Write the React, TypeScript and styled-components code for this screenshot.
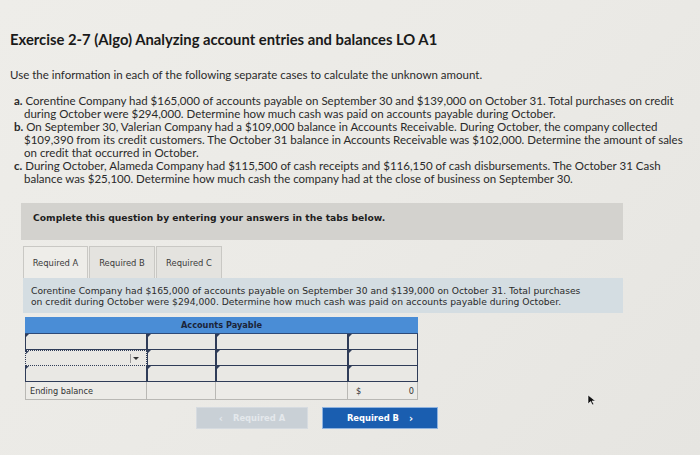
import React from 'react';
import styled, { createGlobalStyle } from 'styled-components';

const GlobalStyle = createGlobalStyle`
  html, body {
    margin: 0;
    padding: 0;
    background: #ebeae6;
  }
  body {
    font-family: Lato, "Open Sans", sans-serif;
    color: #1e1e1e;
  }
`;

const Page = styled.div`
  position: relative;
  width: 700px;
  height: 455px;
  overflow: hidden;
  box-sizing: border-box;
  padding: 29px 0 0 10px;
  background: linear-gradient(135deg, #eeede9 0%, #ebeae6 50%, #e6e5e1 100%);
`;

const Title = styled.h1`
  margin: 0;
  font-family: Lato, sans-serif;
  font-size: 14.8px;
  font-weight: 700;
  line-height: 20px;
  color: #1a1a1a;
`;

const Intro = styled.p`
  margin: 19px 0 0;
  font-family: Lato, sans-serif;
  font-size: 11.5px;
  line-height: 13px;
  color: #2a2a2a;
`;

const CaseList = styled.ol`
  list-style: none;
  margin: 13px 0 0;
  padding: 0 0 0 4px;
  width: 684px;
`;

const CaseItem = styled.li`
  font-family: Lato, sans-serif;
  font-size: 11.5px;
  line-height: 13px;
  color: #2a2a2a;
  padding-left: 10px;
  text-indent: -10px;
`;

const Letter = styled.span`
  font-weight: 700;
`;

const Banner = styled.div`
  margin: 18px 0 0 11px;
  width: 602px;
  height: 37px;
  box-sizing: border-box;
  padding: 9px 12px;
  background: #d3d2ce;
  font-family: "DejaVu Sans", Verdana, sans-serif;
  font-size: 9.2px;
  font-weight: 700;
  color: #1e1e1e;
`;

const Tabs = styled.div`
  display: flex;
  gap: 1px;
  margin: 6px 0 0 13px;
`;

const Tab = styled.div<{ $active?: boolean }>`
  width: ${p => (p.$active ? 65 : 66)}px;
  height: 32px;
  box-sizing: border-box;
  display: flex;
  align-items: center;
  justify-content: center;
  border: 1px solid #c9c8c4;
  border-bottom: none;
  background: ${p => (p.$active ? '#eeede9' : '#e4e3df')};
  font-family: "DejaVu Sans", Verdana, sans-serif;
  font-size: 8.4px;
  color: #3a3a3a;
`;

const InfoPanel = styled.div`
  margin-left: 13px;
  width: 600px;
  height: 35px;
  box-sizing: border-box;
  padding: 7px 8px 0;
  background: #d4dde2;
  font-family: "DejaVu Sans", Verdana, sans-serif;
  font-size: 9.2px;
  line-height: 11px;
  color: #2b2b2b;
`;

const Ledger = styled.div`
  margin: 4px 0 0 15px;
  width: 393px;
  display: grid;
  grid-template-columns: 122px 69px 132px 70px;
`;

const HeaderBar = styled.div`
  grid-column: 1 / -1;
  height: 16px;
  background: #4a8dd6;
  border-bottom: 1px solid #2d4a78;
  display: flex;
  align-items: center;
  justify-content: center;
  font-family: "DejaVu Sans", Verdana, sans-serif;
  font-size: 8.2px;
  font-weight: 700;
  color: #1b2438;
`;

const InputCell = styled.div<{ $dotted?: boolean }>`
  position: relative;
  height: 16px;
  box-sizing: border-box;
  background: #e9e8e4;
  border: 1.5px ${p => (p.$dotted ? 'dotted' : 'solid')} #2f3c58;
  border-top-width: ${p => (p.$dotted ? '1.5px' : '0')};
  &::before {
    content: '';
    position: absolute;
    left: 0;
    top: 0;
    border-top: 3px solid #2f3c58;
    border-right: 3px solid transparent;
  }
`;

const DropArrow = styled.span`
  position: absolute;
  right: 6px;
  top: 3px;
  bottom: 2px;
  width: 9px;
  border-left: 1px solid #9a9a9a;
  display: flex;
  align-items: center;
  justify-content: center;
  &::after {
    content: '';
    border-left: 3px solid transparent;
    border-right: 3px solid transparent;
    border-top: 3px solid #333;
  }
`;

const TotalCell = styled.div`
  height: 18px;
  box-sizing: border-box;
  border: 1px solid #b9b8b4;
  border-top: none;
  border-left-width: 0;
  background: #ecebe7;
  display: flex;
  align-items: center;
  padding: 0 4px;
  font-family: "DejaVu Sans", Verdana, sans-serif;
  font-size: 8.2px;
  color: #333;
`;

const FirstTotal = styled(TotalCell)`
  border-left-width: 1px;
`;

const Amount = styled(TotalCell)`
  justify-content: space-between;
  padding: 0 3px 0 8px;
`;

const Nav = styled.div`
  display: flex;
  gap: 14px;
  margin: 7px 0 0 186px;
`;

const NavButton = styled.div<{ $primary?: boolean }>`
  width: ${p => (p.$primary ? 116 : 112)}px;
  height: 22px;
  box-sizing: border-box;
  display: flex;
  align-items: center;
  justify-content: center;
  gap: 10px;
  background: ${p => (p.$primary ? '#1a5eb0' : '#c9d0d6')};
  border: 1px solid ${p => (p.$primary ? '#8fb3df' : '#d6dbe0')};
  font-family: "DejaVu Sans", Verdana, sans-serif;
  font-size: 8.4px;
  font-weight: 700;
  color: ${p => (p.$primary ? '#ffffff' : '#e4e8ec')};
`;

const Chevron = styled.span`
  font-size: 10px;
  font-weight: 700;
`;

const Cursor = styled.svg`
  position: absolute;
  left: 587px;
  top: 394px;
`;

const cases = [
  {
    letter: 'a.',
    text: 'Corentine Company had $165,000 of accounts payable on September 30 and $139,000 on October 31. Total purchases on credit during October were $294,000. Determine how much cash was paid on accounts payable during October.',
  },
  {
    letter: 'b.',
    text: 'On September 30, Valerian Company had a $109,000 balance in Accounts Receivable. During October, the company collected $109,390 from its credit customers. The October 31 balance in Accounts Receivable was $102,000. Determine the amount of sales on credit that occurred in October.',
  },
  {
    letter: 'c.',
    text: 'During October, Alameda Company had $115,500 of cash receipts and $116,150 of cash disbursements. The October 31 Cash balance was $25,100. Determine how much cash the company had at the close of business on September 30.',
  },
];

const App = () => {
  return (
    <>
      <GlobalStyle />
      <Page>
        <Title>Exercise 2-7 (Algo) Analyzing account entries and balances LO A1</Title>
        <Intro>Use the information in each of the following separate cases to calculate the unknown amount.</Intro>
        <CaseList>
          {cases.map(c => (
            <CaseItem key={c.letter}>
              <Letter>{c.letter}</Letter> {c.text}
            </CaseItem>
          ))}
        </CaseList>

        <Banner>Complete this question by entering your answers in the tabs below.</Banner>

        <Tabs>
          <Tab $active>Required A</Tab>
          <Tab>Required B</Tab>
          <Tab>Required C</Tab>
        </Tabs>
        <InfoPanel>
          Corentine Company had $165,000 of accounts payable on September 30 and $139,000 on October 31. Total purchases
          <br />
          on credit during October were $294,000. Determine how much cash was paid on accounts payable during October.
        </InfoPanel>

        <Ledger>
          <HeaderBar>Accounts Payable</HeaderBar>
          <InputCell />
          <InputCell />
          <InputCell />
          <InputCell />
          <InputCell $dotted>
            <DropArrow />
          </InputCell>
          <InputCell />
          <InputCell />
          <InputCell />
          <InputCell />
          <InputCell />
          <InputCell />
          <InputCell />
          <FirstTotal>Ending balance</FirstTotal>
          <TotalCell />
          <TotalCell />
          <Amount>
            <span>$</span>
            <span>0</span>
          </Amount>
        </Ledger>

        <Nav>
          <NavButton>
            <Chevron>&lsaquo;</Chevron>
            <span>Required A</span>
          </NavButton>
          <NavButton $primary>
            <span>Required B</span>
            <Chevron>&rsaquo;</Chevron>
          </NavButton>
        </Nav>

        <Cursor width="10" height="12" viewBox="0 0 10 12">
          <path d="M1 1 L1 10 L3.5 7.5 L5.5 11 L7 10.3 L5 7 L8.5 7 Z" fill="#111" stroke="#fff" strokeWidth="0.6" />
        </Cursor>
      </Page>
    </>
  );
};

export default App;
